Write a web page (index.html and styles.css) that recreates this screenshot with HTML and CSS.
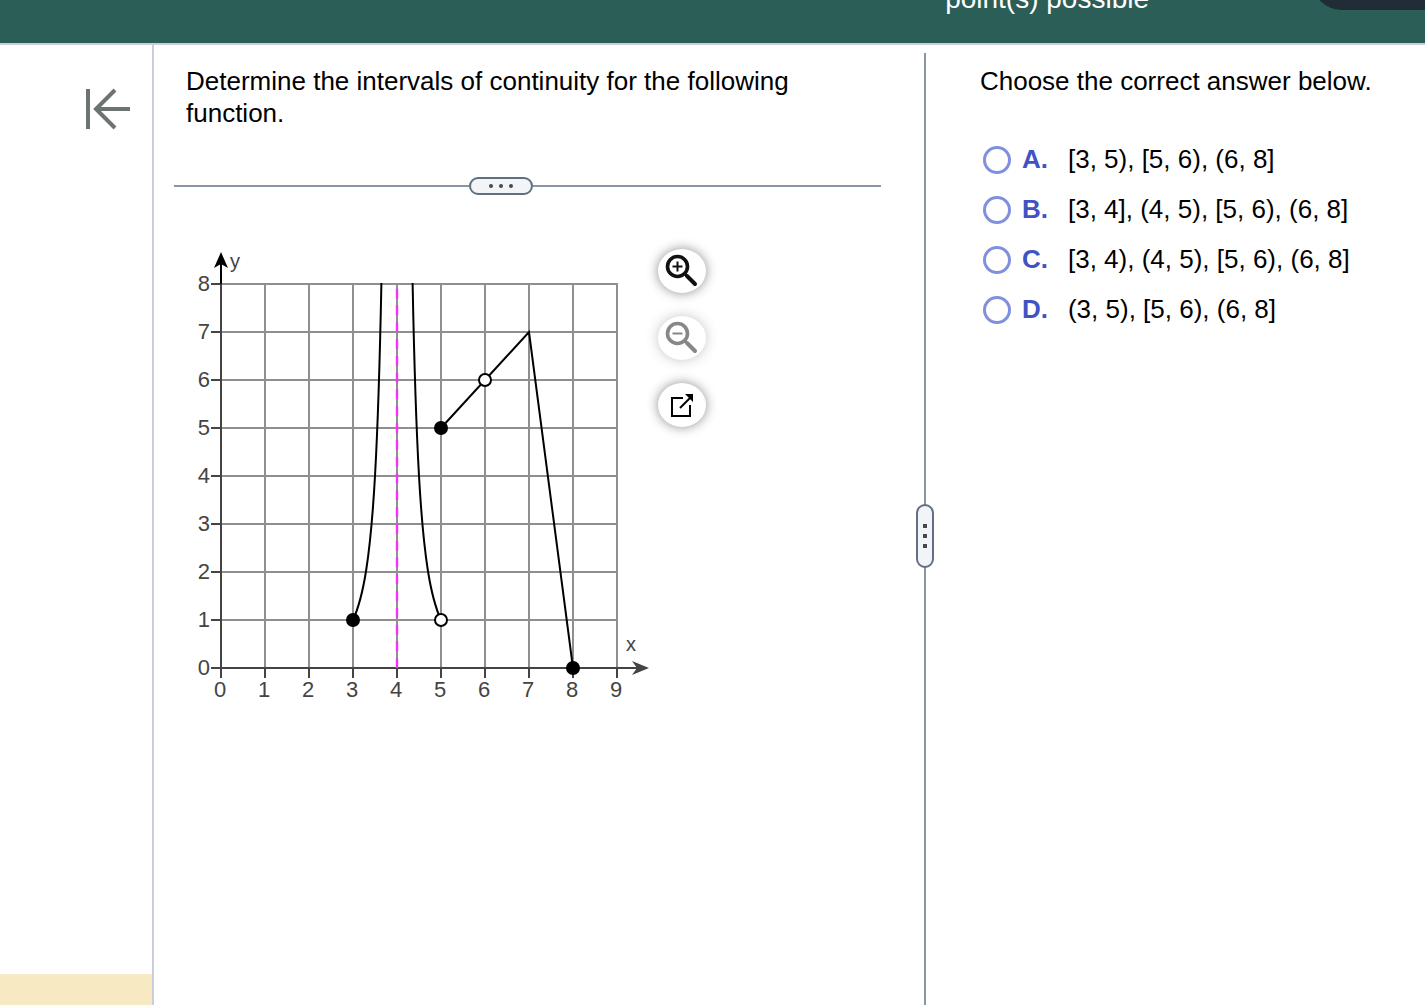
FILE: index.html
```html
<!DOCTYPE html>
<html lang="en">
    <head>
        <meta charset="UTF-8">
        <meta name="viewport" content="width=device-width, initial-scale=1.0">
        <title>Intervals of continuity</title>
        <link rel="stylesheet" href="styles.css">
    </head>
    <body>
        <header class="topbar">
            <span class="points">point(s) possible</span>
            <button class="submit" type="button" aria-label="Submit quiz"></button>
        </header>

        <div class="layout">
            <nav class="sidebar">
                <button class="collapse" type="button" aria-label="Collapse panel">
                    <svg width="48" height="44" viewBox="0 0 48 44" fill="none" stroke="#6b7472" stroke-width="4">
                        <path d="M4 2V42M46 22H12M31 3L12 22L31 41"/>
                    </svg>
                </button>
                <div class="current"></div>
            </nav>

            <main class="question">
                <p class="prompt">Determine the intervals of continuity for the following function.</p>

                <div class="divider">
                    <button class="handle" type="button" aria-label="Resize question"><i></i><i></i><i></i></button>
                </div>

                <div class="figure">
                    <!-- origin of the viewBox is the origin of the graph, 44px per x unit, 48px per y unit -->
                    <svg class="graph" width="472" height="464" viewBox="-35 -425 472 464" role="img" aria-label="Graph of the function">
                        <path class="grid" d="M44 0V-384M88 0V-384M132 0V-384M176 0V-384M220 0V-384M264 0V-384M308 0V-384M352 0V-384M396 0V-384M0 -48H396M0 -96H396M0 -144H396M0 -192H396M0 -240H396M0 -288H396M0 -336H396M0 -384H397"/>
                        <path class="axis" d="M-10 0H418M0 10V-384M-10 -48H0M-10 -96H0M-10 -144H0M-10 -192H0M-10 -240H0M-10 -288H0M-10 -336H0M-10 -384H0M44 0V10M88 0V10M132 0V10M176 0V10M220 0V10M264 0V10M308 0V10M352 0V10M396 0V10"/>
                        <path class="axis-top" d="M0 -384V-406"/>
                        <path d="M0 -416L7 -400L0 -404L-7 -400Z"/>
                        <path class="arrow-x" d="M428 0L411 7L416 0L411 -7Z"/>

                        <path class="asymptote" d="M176 0V-380"/>

                        <path class="curve" d="M132 -48C136.4 -57.6 140.8 -70 145.2 -98C148.1 -116.7 151.1 -140.8 154 -192C156.1 -229.5 158.3 -278 160.4 -385"/>
                        <path class="curve" d="M220 -48C215.6 -57.6 211.2 -70 206.8 -98C203.9 -116.7 200.9 -140.8 198 -192C195.9 -229.5 193.7 -278 191.6 -385"/>
                        <path class="curve" d="M220 -240L308 -336L352 0"/>

                        <circle cx="132" cy="-48" r="7"/>
                        <circle cx="220" cy="-240" r="7"/>
                        <circle cx="352" cy="0" r="7"/>
                        <circle class="open" cx="220" cy="-48" r="6"/>
                        <circle class="open" cx="264" cy="-288" r="6"/>

                        <g class="labels labels-y">
                            <text x="-11" y="7">0</text>
                            <text x="-11" y="-41">1</text>
                            <text x="-11" y="-89">2</text>
                            <text x="-11" y="-137">3</text>
                            <text x="-11" y="-185">4</text>
                            <text x="-11" y="-233">5</text>
                            <text x="-11" y="-281">6</text>
                            <text x="-11" y="-329">7</text>
                            <text x="-11" y="-377">8</text>
                        </g>
                        <g class="labels labels-x">
                            <text x="-1" y="29">0</text>
                            <text x="43" y="29">1</text>
                            <text x="87" y="29">2</text>
                            <text x="131" y="29">3</text>
                            <text x="175" y="29">4</text>
                            <text x="219" y="29">5</text>
                            <text x="263" y="29">6</text>
                            <text x="307" y="29">7</text>
                            <text x="351" y="29">8</text>
                            <text x="395" y="29">9</text>
                            <text class="name" x="410" y="-17">x</text>
                            <text class="name" x="14" y="-400">y</text>
                        </g>
                    </svg>

                    <div class="tools">
                        <button type="button" aria-label="Zoom in">
                            <svg width="48" height="44" viewBox="0 0 48 44" fill="none" stroke="#111">
                                <circle cx="19.5" cy="17.5" r="10" stroke-width="3.6"/>
                                <path d="M14.5 17.5H24.5M19.5 12.5V22.5" stroke-width="2"/>
                                <path d="M26 24L29 27" stroke-width="3"/>
                                <path d="M29 27L37 35" stroke-width="4" stroke-linecap="round"/>
                            </svg>
                        </button>
                        <button type="button" aria-label="Zoom out" disabled>
                            <svg width="48" height="44" viewBox="0 0 48 44" fill="none" stroke="#111">
                                <circle cx="19.5" cy="17.5" r="10" stroke-width="3.6"/>
                                <path d="M14.5 17.5H24.5" stroke-width="2"/>
                                <path d="M26 24L29 27" stroke-width="3"/>
                                <path d="M29 27L37 35" stroke-width="4" stroke-linecap="round"/>
                            </svg>
                        </button>
                        <button type="button" aria-label="Open in new window">
                            <svg width="48" height="44" viewBox="0 0 48 44" fill="none" stroke="#000" stroke-width="2">
                                <path d="M25 15H14V33H32V22"/>
                                <path d="M22 25L32 15"/>
                                <path d="M27 11H35V19Z" fill="#000" stroke="none"/>
                            </svg>
                        </button>
                    </div>
                </div>
            </main>

            <div class="splitter">
                <button class="handle vertical" type="button" aria-label="Resize panes"><i></i><i></i><i></i></button>
            </div>

            <section class="answers">
                <p class="prompt">Choose the correct answer below.</p>
                <form class="choices">
                    <label class="choice">
                        <input type="radio" name="answer" value="A">
                        <b>A.</b>
                        <span>[3, 5), [5, 6), (6, 8]</span>
                    </label>
                    <label class="choice">
                        <input type="radio" name="answer" value="B">
                        <b>B.</b>
                        <span>[3, 4], (4, 5), [5, 6), (6, 8]</span>
                    </label>
                    <label class="choice">
                        <input type="radio" name="answer" value="C">
                        <b>C.</b>
                        <span>[3, 4), (4, 5), [5, 6), (6, 8]</span>
                    </label>
                    <label class="choice">
                        <input type="radio" name="answer" value="D">
                        <b>D.</b>
                        <span>(3, 5), [5, 6), (6, 8]</span>
                    </label>
                </form>
            </section>
        </div>
    </body>
</html>
```
FILE: styles.css
```css
* {
    box-sizing: border-box;
}
body {
    display: flex;
    flex-direction: column;
    min-height: 100vh;
    margin: 0;
    background: #fff;
    color: #000;
    font: 26px/32px "Liberation Sans", Arial, sans-serif;
}
button {
    padding: 0;
    border: none;
    background: none;
    cursor: pointer;
}
svg {
    display: block;
}
p {
    margin: 0;
}

/* header, scrolled most of the way up */
.topbar {
    display: flex;
    justify-content: flex-end;
    align-items: flex-end;
    height: 45px;
    overflow: hidden;
    border-bottom: 2px solid #c9cedd;
    background: #2a5e57;
    color: #fff;
}
.points {
    margin: 0 164px 28px 0;
    font-size: 28px;
}
.submit {
    width: 124px;
    height: 56px;
    margin: 0 -12px 33px 0;
    border-radius: 28px 0 0 28px;
    background: #212d36;
}

.layout {
    display: grid;
    grid-template-columns: 154px minmax(0, 54fr) 2px minmax(0, 35fr);
    flex: 1;
}
.sidebar {
    display: flex;
    flex-direction: column;
    justify-content: space-between;
    border-right: 2px solid #c9cedd;
}
.collapse {
    align-self: flex-end;
    margin: 42px 20px 0 0;
}
.current {
    height: 31px;
    background: #f7eac3;
}

.question {
    padding: 20px 43px 0 20px;
}
.question .prompt {
    padding-left: 12px;
}
.divider {
    display: flex;
    align-items: center;
    margin: 48px 0;
}
.divider::before,
.divider::after {
    content: "";
    flex: 11;
    height: 2px;
    background: #8994a5;
}
.divider::after {
    flex: 13;
}
.handle {
    display: flex;
    justify-content: center;
    align-items: center;
    gap: 6px;
    width: 64px;
    height: 18px;
    border: 2px solid #617080;
    border-radius: 9px;
    background: #f2f4f7;
}
.handle i {
    width: 4px;
    height: 4px;
    border-radius: 2px;
    background: #484848;
}

.figure {
    display: flex;
    align-items: flex-start;
    padding-left: 12px;
}
.graph {
    flex: none;
}
.grid,
.axis,
.axis-top,
.curve {
    fill: none;
    stroke-width: 2;
}
.grid {
    stroke: #8f8f8f;
}
.axis {
    stroke: #444;
}
.axis-top,
.curve {
    stroke: #000;
}
.arrow-x {
    fill: #444;
}
.asymptote {
    stroke: #f235f2;
    stroke-width: 2.4;
    stroke-dasharray: 9.6 7.2;
}
.open {
    fill: #fff;
    stroke: #000;
    stroke-width: 2;
}
.labels {
    fill: #444;
    font-size: 22px;
}
.labels-y {
    text-anchor: end;
}
.labels-x {
    text-anchor: middle;
}
.name {
    font-size: 20px;
}

.tools {
    display: flex;
    flex-direction: column;
    gap: 23px;
    padding-top: 6px;
}
.tools button {
    width: 48px;
    height: 44px;
    border-radius: 50%;
    background: #fff;
    box-shadow: 0 0 12px rgba(0, 0, 0, 0.45);
}
.tools button:disabled {
    opacity: 0.5;
}

.splitter {
    position: relative;
    margin-top: 8px;
    background: #8994a5;
}
.vertical {
    position: absolute;
    top: 451px;
    left: -8px;
    flex-direction: column;
    width: 18px;
    height: 64px;
}
.vertical i {
    border-radius: 0;
}

.answers {
    padding: 20px 0 0 54px;
}
.choices {
    margin-top: 38px;
}
.choice {
    display: flex;
    align-items: center;
    height: 50px;
}
.choice input {
    flex: none;
    appearance: none;
    width: 28px;
    height: 28px;
    margin: 0 11px 0 3px;
    border: 3px solid #8090de;
    border-radius: 50%;
    background: #fff;
}
.choice input:checked {
    background: radial-gradient(#3f53c4 6px, #fff 7px);
}
.choice b,
.choice span {
    padding-bottom: 2px;
}
.choice b {
    flex: none;
    width: 46px;
    color: #3f53c4;
}
```
